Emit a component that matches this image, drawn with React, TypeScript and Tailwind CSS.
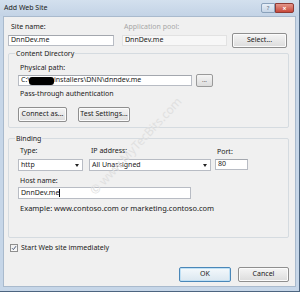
import React from 'react';

const FONT = { fontFamily: '"Noto Sans", "Open Sans", Arial, sans-serif' };

function Btn({ w, label, primary }: { w: string; label: string; primary?: boolean }) {
  return (
    <div
      className={`${w} h-[15px] flex items-center justify-center rounded-[2px] border text-[7px] text-[#1a1a1a] bg-gradient-to-b ${
        primary
          ? 'border-[#4a87b8] from-[#f4f9fc] to-[#dbe7f0] shadow-[inset_0_0_0_1px_#bfe0f5]'
          : 'border-[#8f8f8f] from-[#f5f5f5] to-[#dcdcdc] shadow-[inset_0_0_0_1px_#fbfbfb]'
      }`}
    >
      {label}
    </div>
  );
}

function Box({ w, children, disabled }: { w: string; children?: React.ReactNode; disabled?: boolean }) {
  return (
    <div
      className={`${w} h-[11px] flex items-center pl-[2px] border text-[7px] text-[#1a1a1a] ${
        disabled ? 'bg-[#f7f7f7] border-[#e2e2e2]' : 'bg-white border-[#b8bcc4] border-t-[#a3a7ae]'
      }`}
    >
      {children}
    </div>
  );
}

function Select({ w, value }: { w: string; value: string }) {
  return (
    <div className={`${w} h-[12px] flex items-center justify-between pl-[2px] pr-[3px] bg-white border border-[#b8bcc4] text-[7px] text-[#1a1a1a]`}>
      <span>{value}</span>
      <span className="w-0 h-0 border-l-[2.5px] border-r-[2.5px] border-t-[3px] border-l-transparent border-r-transparent border-t-[#222]" />
    </div>
  );
}

function Label({ children, grey }: { children: React.ReactNode; grey?: boolean }) {
  return <div className={`h-[10px] leading-[10px] pl-[2px] text-[7px] whitespace-nowrap ${grey ? 'text-[#a6a6a6]' : 'text-[#1a1a1a]'}`}>{children}</div>;
}

function Group({ title, children, className }: { title: string; children: React.ReactNode; className?: string }) {
  return (
    <div className={`ml-[4px] w-[281px] border border-[#d5dbe0] rounded-[2px] ${className ?? ''}`}>
      <div className="-mt-[5px] ml-[6px] w-fit px-[1px] h-[10px] leading-[10px] text-[7px] text-[#1a1a1a] bg-[#f0f0f0]">{title}</div>
      <div className="pl-[9px]">{children}</div>
    </div>
  );
}

export default function App() {
  return (
    <div className="w-[300px] h-[292px] relative overflow-hidden select-none" style={FONT}>
      <div className="w-full h-full flex flex-col bg-[#c6d6e8] border-r border-b border-[#4d6580]">
        {/* title bar */}
        <div className="h-[16px] flex items-center bg-gradient-to-b from-[#d3e0ee] to-[#c3d3e6]">
          <span className="ml-[4px] text-[7px] text-[#1a1a1a]">Add Web Site</span>
          <div className="ml-auto mr-[5px] flex items-start self-start mt-[3px]">
            <div className="w-[14px] h-[10px] flex items-center justify-center rounded-l-[2px] border border-[#8aa1ba] bg-gradient-to-b from-[#e6eef7] to-[#c6d5e6] text-[6px] text-[#54687e]">
              ?
            </div>
            <div className="w-[19px] h-[10px] flex items-center justify-center rounded-r-[2px] border border-[#8e3b35] bg-gradient-to-b from-[#e3958a] to-[#c7473a] text-[7px] leading-none text-white font-bold">
              ×
            </div>
          </div>
        </div>

        {/* client area */}
        <div className="ml-[3px] mr-[3px] mb-[4px] flex-1 bg-[#f0f0f0] border border-[#a9bacd] flex flex-col pt-[5px]">
          <div className="flex items-end">
            <div className="ml-[4px]">
              <div className="pl-[1px]"><Label>Site name:</Label></div>
              <div className="mt-[3px]"><Box w="w-[106px]">DnnDev.me</Box></div>
            </div>
            <div className="ml-[8px]">
              <Label grey>Application pool:</Label>
              <div className="mt-[3px]"><Box w="w-[105px]" disabled>DnnDev.me</Box></div>
            </div>
            <div className="ml-[5px] -mb-[2px]">
              <Btn w="w-[55px]" label="Select..." />
            </div>
          </div>

          <Group title="Content Directory" className="mt-[7px] h-[75px]">
            <div className="mt-[4px]"><Label>Physical path:</Label></div>
            <div className="mt-[1px] flex items-center">
              <Box w="w-[174px]">
                <span>C:\</span>
                <span className="inline-block w-[25px] h-[8px] bg-black rounded-[3px] -ml-[1px]" />
                <span>installers\DNN\dnndev.me</span>
              </Box>
              <div className="ml-[4px] w-[17px] h-[13px] flex items-end justify-center pb-[3px] rounded-[2px] border border-[#9a9a9a] bg-gradient-to-b from-[#f5f5f5] to-[#dcdcdc] text-[6px] leading-none text-[#333]">
                ...
              </div>
            </div>
            <div className="mt-[2px]"><Label>Pass-through authentication</Label></div>
            <div className="mt-[8px] flex gap-[11px]">
              <Btn w="w-[49px]" label="Connect as..." />
              <Btn w="w-[52px]" label="Test Settings..." />
            </div>
          </Group>

          <Group title="Binding" className="mt-[10px] h-[100px]">
            <div className="mt-[2px] flex items-end">
              <div>
                <Label>Type:</Label>
                <div className="mt-[3px]"><Select w="w-[65px]" value="http" /></div>
              </div>
              <div className="ml-[6px]">
                <Label>IP address:</Label>
                <div className="mt-[3px]"><Select w="w-[122px]" value="All Unassigned" /></div>
              </div>
              <div className="ml-[4px]">
                <Label>Port:</Label>
                <div className="mt-[2px] mb-[1px]"><Box w="w-[33px]">80</Box></div>
              </div>
            </div>
            <div className="mt-[5px]"><Label>Host name:</Label></div>
            <div className="mt-[1px]">
              <div className="w-[173px] h-[12px] flex items-center pl-[2px] bg-white border border-[#b8bcc4] text-[7px] text-[#1a1a1a]">
                DnnDev.me<span className="w-px h-[8px] bg-black" />
              </div>
            </div>
            <div className="mt-[4px] h-[10px] leading-[10px] pl-[2px] text-[7.5px] text-[#1a1a1a] whitespace-nowrap">
              Example: www.contoso.com or marketing.contoso.com
            </div>
          </Group>

          <div className="mt-[5px] ml-[6px] h-[10px] flex items-center">
            <div className="w-[8px] h-[8px] border border-[#8f8f8f] bg-gradient-to-b from-[#f0f0f0] to-[#fafafa] flex items-center justify-center">
              <svg width="6" height="6" viewBox="0 0 6 6">
                <path d="M1 3.2 L2.4 4.6 L5 1.2" fill="none" stroke="#4a5a78" strokeWidth="1" />
              </svg>
            </div>
            <span className="ml-[3px] text-[7px] text-[#1a1a1a]">Start Web site immediately</span>
          </div>

          <div className="mt-[14px] flex justify-end gap-[7px] pr-[6px]">
            <Btn w="w-[52px]" label="OK" primary />
            <Btn w="w-[51px]" label="Cancel" />
          </div>
        </div>
      </div>

      {/* watermark */}
      <div className="absolute left-[72px] top-[137px] -rotate-[47deg] text-[12px] text-[#e0e0e0] whitespace-nowrap pointer-events-none">
        © www.MyTecBits.com
      </div>
    </div>
  );
}
